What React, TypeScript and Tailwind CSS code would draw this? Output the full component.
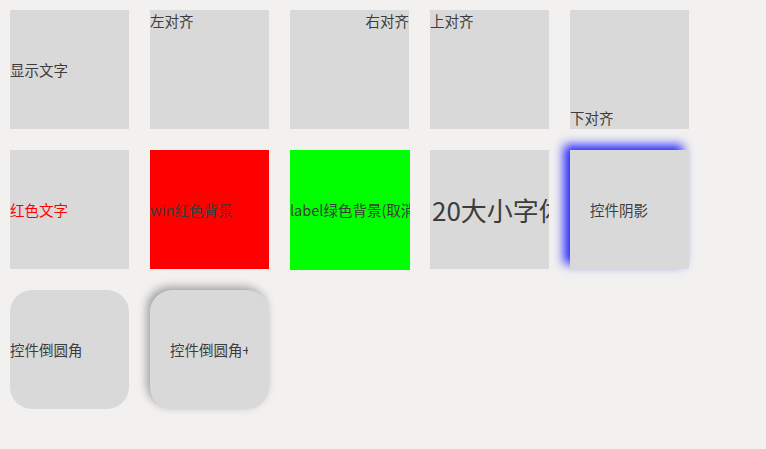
const font = { fontFamily: '"Noto Sans CJK SC", "Noto Sans", sans-serif' };

function Box({
  className = '',
  children,
}: {
  className?: string;
  children?: React.ReactNode;
}) {
  return (
    <div
      className={`flex w-[119px] h-[119px] shrink-0 overflow-hidden whitespace-nowrap text-[14.5px] leading-[22px] text-[#3c3c3c] ${className}`}
    >
      {children}
    </div>
  );
}

export default function App() {
  return (
    <div className="w-[766px] h-[449px] bg-[#f2f1f0] p-[10px]" style={font}>
      <div className="flex flex-col gap-[21px]">
        {/* Row 1: alignment */}
        <div className="flex gap-[21px]">
          <Box className="bg-[#d9d9d9] items-center">显示文字</Box>
          <Box className="bg-[#d9d9d9] items-start">左对齐</Box>
          <Box className="bg-[#d9d9d9] items-start justify-end">右对齐</Box>
          <Box className="bg-[#d9d9d9] items-start">上对齐</Box>
          <Box className="bg-[#d9d9d9] items-end">下对齐</Box>
        </div>

        {/* Row 2: colours, size, shadow */}
        <div className="flex gap-[21px] items-start">
          <Box className="bg-[#d9d9d9] items-center !text-[#ff0000]">红色文字</Box>
          <Box className="bg-[#ff0000] items-center">win红色背景</Box>
          <Box className="bg-[#00ff00] items-center !w-[120px] !h-[120px] -mr-[1px] -mb-[1px]">label绿色背景(取消边框)</Box>
          <Box className="bg-[#d9d9d9] items-center !text-[26px] !leading-[32px] pl-[2px]">20大小字体</Box>
          <div className="flex w-[119px] h-[119px] shrink-0 items-center bg-[#d9d9d9] pl-[20px] text-[14.5px] leading-[22px] text-[#3c3c3c] shadow-[-6px_-5px_10px_0_#2424ff]">
            控件阴影
          </div>
        </div>

        {/* Row 3: rounded corners */}
        <div className="flex gap-[21px]">
          <Box className="bg-[#d9d9d9] items-center rounded-[22px]">控件倒圆角</Box>
          <div className="flex w-[119px] h-[119px] shrink-0 items-center bg-[#d9d9d9] rounded-[22px] pl-[20px] pr-[21px] text-[14.5px] leading-[22px] text-[#3c3c3c] shadow-[-3px_-3px_10px_rgba(0,0,0,0.35)]">
            <span className="block overflow-hidden whitespace-nowrap">控件倒圆角+阴影</span>
          </div>
        </div>
      </div>
    </div>
  );
}
